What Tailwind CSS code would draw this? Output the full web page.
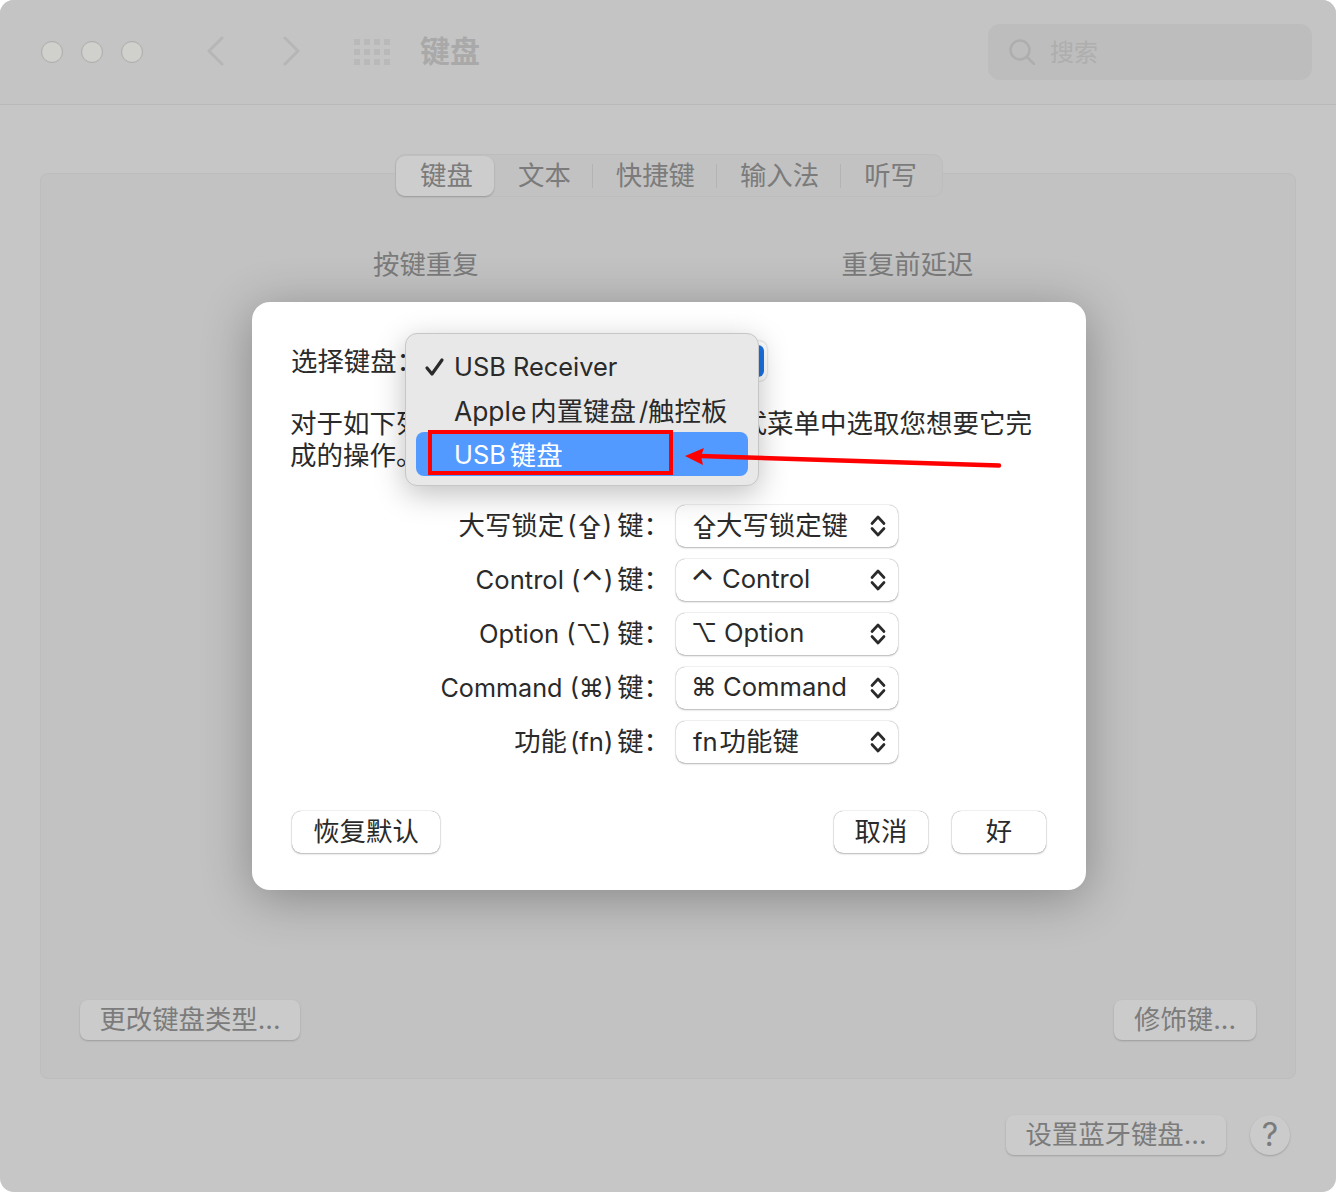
<!DOCTYPE html>
<html lang="zh-CN">
<head>
    <meta charset="UTF-8">
    <title>键盘</title>
    <script src="https://cdn.jsdelivr.net/npm/@tailwindcss/browser@4"></script>
</head>
<body class="bg-white">
    <div class="relative w-[1336px] h-[1192px] overflow-hidden font-['Inter','Noto_Sans_CJK_SC','DejaVu_Sans',sans-serif] text-[26.4px] leading-[32px]">
        <!-- Window behind the sheet -->
        <div class="w-[1336px] h-[1192px] rounded-[14px] bg-[#c6c6c6] text-[#7b7b7b]">
            <header class="h-[105px] flex items-center pl-[41px] pr-[24px] rounded-t-[14px] bg-[#c4c4c4] border-b border-[#b9b9b9]">
                <div class="flex gap-[18px]">
                    <span class="w-[22px] h-[22px] rounded-full bg-[#d0d0cc] border border-[#acacac]"></span>
                    <span class="w-[22px] h-[22px] rounded-full bg-[#d0d0cc] border border-[#acacac]"></span>
                    <span class="w-[22px] h-[22px] rounded-full bg-[#d0d0cc] border border-[#acacac]"></span>
                </div>
                <svg class="ml-[63px] w-[20px] h-[30px] -translate-y-px" viewBox="0 0 20 30" fill="none" stroke="#b6b6b6" stroke-width="3" stroke-linecap="round" stroke-linejoin="round"><path d="M16 2 3 15l13 13"/></svg>
                <svg class="ml-[55px] w-[20px] h-[30px] -translate-y-px" viewBox="0 0 20 30" fill="none" stroke="#b6b6b6" stroke-width="3" stroke-linecap="round" stroke-linejoin="round"><path d="M4 2l13 13L4 28"/></svg>
                <div class="ml-[53px] grid grid-cols-4 gap-x-[4px] gap-y-[4px]">
                    <span class="w-[6px] h-[6px] bg-[#b9b9b9]"></span><span class="w-[6px] h-[6px] bg-[#b9b9b9]"></span><span class="w-[6px] h-[6px] bg-[#b9b9b9]"></span><span class="w-[6px] h-[6px] bg-[#b9b9b9]"></span>
                    <span class="w-[6px] h-[6px] bg-[#b9b9b9]"></span><span class="w-[6px] h-[6px] bg-[#b9b9b9]"></span><span class="w-[6px] h-[6px] bg-[#b9b9b9]"></span><span class="w-[6px] h-[6px] bg-[#b9b9b9]"></span>
                    <span class="w-[6px] h-[6px] bg-[#b9b9b9]"></span><span class="w-[6px] h-[6px] bg-[#b9b9b9]"></span><span class="w-[6px] h-[6px] bg-[#b9b9b9]"></span><span class="w-[6px] h-[6px] bg-[#b9b9b9]"></span>
                </div>
                <h1 class="ml-[30px] text-[30px] font-bold text-[#a9a9a9] -translate-y-px">键盘</h1>
                <div class="ml-auto w-[324px] h-[56px] rounded-[12px] bg-[#bdbdbd] flex items-center pl-[21px]">
                    <svg class="w-[26px] h-[26px]" viewBox="0 0 26 26" fill="none" stroke="#aeaeae" stroke-width="2.5" stroke-linecap="round"><circle cx="11" cy="11" r="9.5"/><path d="M18 18l7 7"/></svg>
                    <span class="ml-[15px] text-[24px] text-[#aeaeae] translate-y-px">搜索</span>
                </div>
            </header>

            <div class="relative z-10 ml-[395px] mt-[49px] -mb-[24px] w-[548px] h-[43px] flex items-center rounded-[10px] bg-[#c2c2c2] border border-[#bdbdbd] whitespace-nowrap">
                <span class="w-[98px] h-[40px] pl-[3px] flex items-center justify-center rounded-[9px] bg-[#cdcdcd] shadow-[0_1px_2px_rgba(0,0,0,0.2)]"><span class="-translate-y-px">键盘</span></span>
                <span class="ml-[24px] -translate-y-px">文本</span>
                <span class="ml-[21px] w-px h-[24px] bg-[#b4b4b4]"></span>
                <span class="ml-[23px] -translate-y-px">快捷键</span>
                <span class="ml-[21px] w-px h-[24px] bg-[#b4b4b4]"></span>
                <span class="ml-[23px] -translate-y-px">输入法</span>
                <span class="ml-[21px] w-px h-[24px] bg-[#b4b4b4]"></span>
                <span class="ml-[23px] -translate-y-px">听写</span>
            </div>

            <main class="mx-[40px] h-[906px] rounded-[8px] bg-[#c2c2c2] border border-[#bdbdbd] flex flex-col">
                <div class="mt-[74px] ml-[332px] flex">
                    <span>按键重复</span>
                    <span class="ml-[363px]">重复前延迟</span>
                </div>
                <div class="mt-auto mb-[38px] mx-[39px] flex justify-between">
                    <span class="w-[220px] h-[40px] flex items-center justify-center rounded-[8px] bg-[#cbcbcb] shadow-[0_1px_2px_rgba(0,0,0,0.2)]"><span class="-translate-y-px">更改键盘类型...</span></span>
                    <span class="w-[142px] h-[40px] flex items-center justify-center rounded-[8px] bg-[#cbcbcb] shadow-[0_1px_2px_rgba(0,0,0,0.2)]"><span class="-translate-y-px">修饰键...</span></span>
                </div>
            </main>

            <div class="mt-[36px] pr-[46px] flex justify-end items-center gap-[24px]">
                <span class="w-[220px] h-[40px] flex items-center justify-center rounded-[8px] bg-[#cbcbcb] shadow-[0_1px_2px_rgba(0,0,0,0.2)]"><span class="-translate-y-px">设置蓝牙键盘...</span></span>
                <span class="w-[40px] h-[40px] flex items-center justify-center rounded-full bg-[#cbcbcb] shadow-[0_1px_2px_rgba(0,0,0,0.2)] text-[32px]">?</span>
            </div>
        </div>

        <!-- Sheet -->
        <div class="absolute left-[252px] top-[302px] w-[834px] h-[588px] rounded-[18px] bg-white text-[#2a2a2a] px-[39px] pt-[43px] shadow-[0_8px_50px_rgba(0,0,0,0.3)]">
            <div class="flex items-center h-[32px]">
                <span class="w-[132px] shrink-0 whitespace-nowrap">选择键盘：</span>
                <div class="ml-[-13px] w-[357px] h-[40px] flex justify-end rounded-[8px] shadow-[0_0_2px_rgba(0,0,0,0.3)]">
                    <span class="w-[30px] h-[32px] mt-[4px] mr-[3px] rounded-[6px] bg-[#1a73e6]"></span>
                </div>
            </div>
            <p class="mt-[30px] -ml-px text-[26.5px]">对于如下列出的每个修饰键，请从弹出式菜单中选取您想要它完成的操作。</p>

            <div class="mt-[34px] flex flex-col gap-[12px]">
                <div class="flex items-center gap-[6px]">
                    <span class="w-[379px] text-right whitespace-nowrap -translate-y-px">大写锁定<span class="ml-[3px] text-[25.6px]">(⇪)</span><span class="ml-[5px]">键：</span></span>
                    <div class="w-[222px] h-[42px] pl-[17px] pr-[12px] flex items-center justify-between rounded-[9px] bg-white shadow-[0_0_1px_rgba(0,0,0,0.5),0_1px_2px_rgba(0,0,0,0.25)]">
                        <span class="flex whitespace-nowrap -translate-y-px"><span class="-ml-[2px] w-[25px]">⇪</span><span>大写锁定键</span></span>
                        <svg class="w-[16px] h-[24px]" viewBox="0 0 16 24" fill="none" stroke="#2a2a2a" stroke-width="2.7" stroke-linecap="round" stroke-linejoin="round"><path d="M2 9.500 8 3l6 6.500M2 14.500 8 21l6-6.500"/></svg>
                    </div>
                </div>
                <div class="flex items-center gap-[6px]">
                    <span class="w-[379px] text-right whitespace-nowrap -translate-y-px"><span class="text-[25.6px]">Control (<span class="inline-block translate-y-[3px] text-[30px]">⌃</span>)</span><span class="ml-[4px]">键：</span></span>
                    <div class="w-[222px] h-[42px] pl-[17px] pr-[12px] flex items-center justify-between rounded-[9px] bg-white shadow-[0_0_1px_rgba(0,0,0,0.5),0_1px_2px_rgba(0,0,0,0.25)]">
                        <span class="flex whitespace-nowrap -translate-y-px text-[25.6px]"><span class="-ml-[3px] w-[32px] text-[32px] translate-y-[3px]">⌃</span><span>Control</span></span>
                        <svg class="w-[16px] h-[24px]" viewBox="0 0 16 24" fill="none" stroke="#2a2a2a" stroke-width="2.7" stroke-linecap="round" stroke-linejoin="round"><path d="M2 9.500 8 3l6 6.500M2 14.500 8 21l6-6.500"/></svg>
                    </div>
                </div>
                <div class="flex items-center gap-[6px]">
                    <span class="w-[379px] text-right whitespace-nowrap -translate-y-px"><span class="text-[25.6px]">Option (⌥)</span><span class="ml-[6px]">键：</span></span>
                    <div class="w-[222px] h-[42px] pl-[17px] pr-[12px] flex items-center justify-between rounded-[9px] bg-white shadow-[0_0_1px_rgba(0,0,0,0.5),0_1px_2px_rgba(0,0,0,0.25)]">
                        <span class="flex whitespace-nowrap -translate-y-px text-[25.6px]"><span class="-ml-[2px] w-[33px]">⌥</span><span>Option</span></span>
                        <svg class="w-[16px] h-[24px]" viewBox="0 0 16 24" fill="none" stroke="#2a2a2a" stroke-width="2.7" stroke-linecap="round" stroke-linejoin="round"><path d="M2 9.500 8 3l6 6.500M2 14.500 8 21l6-6.500"/></svg>
                    </div>
                </div>
                <div class="flex items-center gap-[6px]">
                    <span class="w-[379px] text-right whitespace-nowrap -translate-y-px"><span class="text-[25.2px]">Command (⌘)</span><span class="ml-[4px]">键：</span></span>
                    <div class="w-[222px] h-[42px] pl-[17px] pr-[12px] flex items-center justify-between rounded-[9px] bg-white shadow-[0_0_1px_rgba(0,0,0,0.5),0_1px_2px_rgba(0,0,0,0.25)]">
                        <span class="flex whitespace-nowrap -translate-y-px text-[25.6px]"><span class="-ml-[2px] w-[32px]">⌘</span><span>Command</span></span>
                        <svg class="w-[16px] h-[24px]" viewBox="0 0 16 24" fill="none" stroke="#2a2a2a" stroke-width="2.7" stroke-linecap="round" stroke-linejoin="round"><path d="M2 9.500 8 3l6 6.500M2 14.500 8 21l6-6.500"/></svg>
                    </div>
                </div>
                <div class="flex items-center gap-[6px]">
                    <span class="w-[379px] text-right whitespace-nowrap -translate-y-px">功能<span class="ml-[3px] text-[25.6px]">(fn)</span><span class="ml-[4px]">键：</span></span>
                    <div class="w-[222px] h-[42px] pl-[17px] pr-[12px] flex items-center justify-between rounded-[9px] bg-white shadow-[0_0_1px_rgba(0,0,0,0.5),0_1px_2px_rgba(0,0,0,0.25)]">
                        <span class="whitespace-nowrap -translate-y-px"><span class="text-[25.6px]">fn</span><span class="ml-[2px]">功能键</span></span>
                        <svg class="w-[16px] h-[24px]" viewBox="0 0 16 24" fill="none" stroke="#2a2a2a" stroke-width="2.7" stroke-linecap="round" stroke-linejoin="round"><path d="M2 9.500 8 3l6 6.500M2 14.500 8 21l6-6.500"/></svg>
                    </div>
                </div>
            </div>

            <div class="mt-[48px] pr-px flex items-center">
                <span class="w-[148px] h-[42px] ml-px flex items-center justify-center rounded-[9px] bg-white shadow-[0_0_1px_rgba(0,0,0,0.5),0_1px_2px_rgba(0,0,0,0.25)]"><span class="-translate-y-px">恢复默认</span></span>
                <span class="ml-auto w-[94px] h-[42px] flex items-center justify-center rounded-[9px] bg-white shadow-[0_0_1px_rgba(0,0,0,0.5),0_1px_2px_rgba(0,0,0,0.25)]"><span class="-translate-y-px">取消</span></span>
                <span class="ml-[24px] w-[94px] h-[42px] flex items-center justify-center rounded-[9px] bg-white shadow-[0_0_1px_rgba(0,0,0,0.5),0_1px_2px_rgba(0,0,0,0.25)]"><span class="-translate-y-px">好</span></span>
            </div>
        </div>

        <!-- Open popup menu -->
        <div class="absolute left-[405px] top-[333px] w-[354px] h-[153px] rounded-[12px] bg-[#e8e8e8] border border-[#c6c6c6] shadow-[0_8px_30px_rgba(0,0,0,0.25)] text-[#2a2a2a] px-[10px] pt-[10px] whitespace-nowrap">
            <div class="relative h-[44px] flex items-center pl-[38px] pt-[2px]">
                <svg class="absolute left-[8px] top-[13px] w-[21px] h-[20px]" viewBox="0 0 21 20" fill="none" stroke="#2a2a2a" stroke-width="3.2" stroke-linecap="round" stroke-linejoin="round"><path d="M3 11l5 6L18 3"/></svg>
                <span class="text-[25.4px]">USB Receiver</span>
            </div>
            <div class="h-[44px] flex items-center pl-[38px] pt-[2px]"><span>Apple</span><span class="ml-[4px]">内置键盘</span><span class="ml-[3px] text-[25.6px]">/</span><span>触控板</span></div>
            <div class="h-[44px] flex items-center pl-[38px] pt-[2px] rounded-[8px] bg-[#529aff] text-white"><span class="text-[25.4px]">USB</span><span class="ml-[4px]">键盘</span></div>
        </div>

        <!-- Red annotation -->
        <div class="absolute left-[428px] top-[430px] w-[245px] h-[45px] border-[4px] border-[#ff0000]"></div>
        <svg class="absolute left-[680px] top-[440px] w-[330px] h-[36px]" viewBox="0 0 330 36" fill="none">
            <path d="M20 16 319 25.500" stroke="#ff0000" stroke-width="4.500" stroke-linecap="round"/>
            <path d="M5 16 24 8l-3 8 2 9z" fill="#ff0000"/>
        </svg>
    </div>
</body>
</html>
